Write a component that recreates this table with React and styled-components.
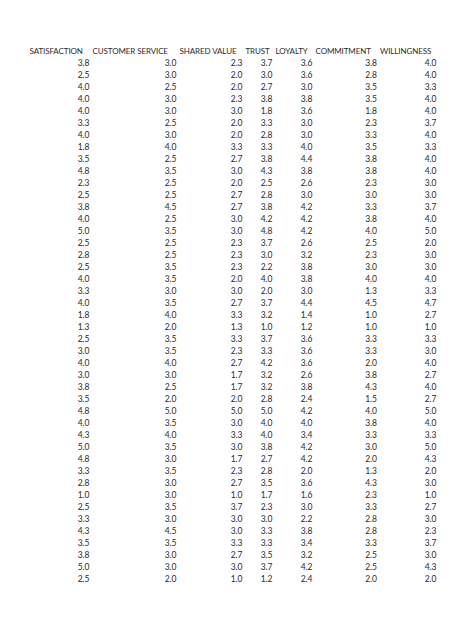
import React from "react";
import styled, { createGlobalStyle } from "styled-components";

const GlobalStyle = createGlobalStyle`
  html, body {
    margin: 0;
    padding: 0;
    background: #ffffff;
  }
  body {
    font-family: Lato, "Open Sans", sans-serif;
    color: #2b2b2b;
  }
`;

const Page = styled.div`
  width: 474px;
  height: 632px;
  box-sizing: border-box;
  padding: 45px 0 0 28px;
  background: #ffffff;
`;

const Sheet = styled.div`
  display: grid;
  grid-template-columns: 63px 87px 66px 30px 40px 64.5px 59.5px;
  grid-auto-rows: 12px;
`;

const HeaderCell = styled.div`
  font-size: 8px;
  line-height: 12px;
  white-space: nowrap;
  text-align: left;
  padding-left: 1.5px;
  letter-spacing: -0.1px;
`;

const NumCell = styled.div`
  font-size: 8.5px;
  line-height: 12px;
  white-space: nowrap;
  text-align: right;
  padding-right: 1.5px;
`;

const headers = [
  "SATISFACTION",
  "CUSTOMER SERVICE",
  "SHARED VALUE",
  "TRUST",
  "LOYALTY",
  "COMMITMENT",
  "WILLINGNESS",
];

const rows = [
  [3.8, 3.0, 2.3, 3.7, 3.6, 3.8, 4.0],
  [2.5, 3.0, 2.0, 3.0, 3.6, 2.8, 4.0],
  [4.0, 2.5, 2.0, 2.7, 3.0, 3.5, 3.3],
  [4.0, 3.0, 2.3, 3.8, 3.8, 3.5, 4.0],
  [4.0, 3.0, 3.0, 1.8, 3.6, 1.8, 4.0],
  [3.3, 2.5, 2.0, 3.3, 3.0, 2.3, 3.7],
  [4.0, 3.0, 2.0, 2.8, 3.0, 3.3, 4.0],
  [1.8, 4.0, 3.3, 3.3, 4.0, 3.5, 3.3],
  [3.5, 2.5, 2.7, 3.8, 4.4, 3.8, 4.0],
  [4.8, 3.5, 3.0, 4.3, 3.8, 3.8, 4.0],
  [2.3, 2.5, 2.0, 2.5, 2.6, 2.3, 3.0],
  [2.5, 2.5, 2.7, 2.8, 3.0, 3.0, 3.0],
  [3.8, 4.5, 2.7, 3.8, 4.2, 3.3, 3.7],
  [4.0, 2.5, 3.0, 4.2, 4.2, 3.8, 4.0],
  [5.0, 3.5, 3.0, 4.8, 4.2, 4.0, 5.0],
  [2.5, 2.5, 2.3, 3.7, 2.6, 2.5, 2.0],
  [2.8, 2.5, 2.3, 3.0, 3.2, 2.3, 3.0],
  [2.5, 3.5, 2.3, 2.2, 3.8, 3.0, 3.0],
  [4.0, 3.5, 2.0, 4.0, 3.8, 4.0, 4.0],
  [3.3, 3.0, 3.0, 2.0, 3.0, 1.3, 3.3],
  [4.0, 3.5, 2.7, 3.7, 4.4, 4.5, 4.7],
  [1.8, 4.0, 3.3, 3.2, 1.4, 1.0, 2.7],
  [1.3, 2.0, 1.3, 1.0, 1.2, 1.0, 1.0],
  [2.5, 3.5, 3.3, 3.7, 3.6, 3.3, 3.3],
  [3.0, 3.5, 2.3, 3.3, 3.6, 3.3, 3.0],
  [4.0, 4.0, 2.7, 4.2, 3.6, 2.0, 4.0],
  [3.0, 3.0, 1.7, 3.2, 2.6, 3.8, 2.7],
  [3.8, 2.5, 1.7, 3.2, 3.8, 4.3, 4.0],
  [3.5, 2.0, 2.0, 2.8, 2.4, 1.5, 2.7],
  [4.8, 5.0, 5.0, 5.0, 4.2, 4.0, 5.0],
  [4.0, 3.5, 3.0, 4.0, 4.0, 3.8, 4.0],
  [4.3, 4.0, 3.3, 4.0, 3.4, 3.3, 3.3],
  [5.0, 3.5, 3.0, 3.8, 4.2, 3.0, 5.0],
  [4.8, 3.0, 1.7, 2.7, 4.2, 2.0, 4.3],
  [3.3, 3.5, 2.3, 2.8, 2.0, 1.3, 2.0],
  [2.8, 3.0, 2.7, 3.5, 3.6, 4.3, 3.0],
  [1.0, 3.0, 1.0, 1.7, 1.6, 2.3, 1.0],
  [2.5, 3.5, 3.7, 2.3, 3.0, 3.3, 2.7],
  [3.3, 3.0, 3.0, 3.0, 2.2, 2.8, 3.0],
  [4.3, 4.5, 3.0, 3.3, 3.8, 2.8, 2.3],
  [3.5, 3.5, 3.3, 3.3, 3.4, 3.3, 3.7],
  [3.8, 3.0, 2.7, 3.5, 3.2, 2.5, 3.0],
  [5.0, 3.0, 3.0, 3.7, 4.2, 2.5, 4.3],
  [2.5, 2.0, 1.0, 1.2, 2.4, 2.0, 2.0],
];

export default function App() {
  return (
    <>
      <GlobalStyle />
      <Page>
        <Sheet>
          {headers.map((h) => (
            <HeaderCell key={h}>{h}</HeaderCell>
          ))}
          {rows.map((row, r) =>
            row.map((v, c) => <NumCell key={`${r}-${c}`}>{v.toFixed(1)}</NumCell>)
          )}
        </Sheet>
      </Page>
    </>
  );
}
